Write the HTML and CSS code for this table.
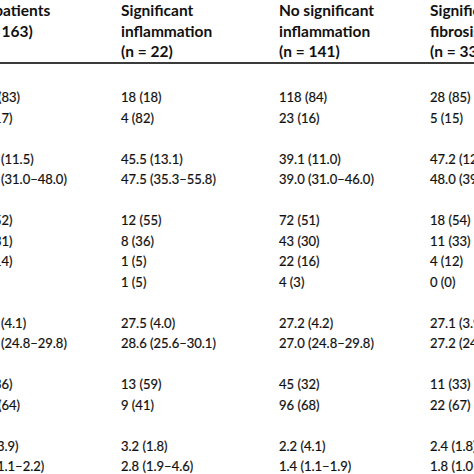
FILE: index.html
```html
<!DOCTYPE html>
<html>
<head>
<meta charset="utf-8">
<link rel="stylesheet" href="styles.css">
</head>
<body>
<table class="data">
  <colgroup>
    <col class="c-a"><col class="c-b"><col class="c-c"><col class="c-d">
  </colgroup>
  <thead>
    <tr>
      <th>All patients<br>(n = 163)</th>
      <th>Significant<br>inflammation<br>(n = 22)</th>
      <th>No significant<br>inflammation<br>(n = 141)</th>
      <th>Significant<br>fibrosis<br>(n = 33)</th>
    </tr>
  </thead>
  <tbody>
    <tr class="gap first"><td></td><td></td><td></td><td></td></tr>
    <tr><td>136 (83)</td><td>18 (18)</td><td>118 (84)</td><td>28 (85)</td></tr>
    <tr><td>27 (17)</td><td>4 (82)</td><td>23 (16)</td><td>5 (15)</td></tr>
    <tr class="gap"><td></td><td></td><td></td><td></td></tr>
    <tr><td>40.0 (11.5)</td><td>45.5 (13.1)</td><td>39.1 (11.0)</td><td>47.2 (12.3)</td></tr>
    <tr><td>40.0 (31.0–48.0)</td><td>47.5 (35.3–55.8)</td><td>39.0 (31.0–46.0)</td><td>48.0 (39.0–55.0)</td></tr>
    <tr class="gap"><td></td><td></td><td></td><td></td></tr>
    <tr><td>84 (52)</td><td>12 (55)</td><td>72 (51)</td><td>18 (54)</td></tr>
    <tr><td>51 (31)</td><td>8 (36)</td><td>43 (30)</td><td>11 (33)</td></tr>
    <tr><td>23 (14)</td><td>1 (5)</td><td>22 (16)</td><td>4 (12)</td></tr>
    <tr><td>5 (3)</td><td>1 (5)</td><td>4 (3)</td><td>0 (0)</td></tr>
    <tr class="gap"><td></td><td></td><td></td><td></td></tr>
    <tr><td>27.2 (4.1)</td><td>27.5 (4.0)</td><td>27.2 (4.2)</td><td>27.1 (3.9)</td></tr>
    <tr><td>27.1 (24.8–29.8)</td><td>28.6 (25.6–30.1)</td><td>27.0 (24.8–29.8)</td><td>27.2 (24.6–29.5)</td></tr>
    <tr class="gap"><td></td><td></td><td></td><td></td></tr>
    <tr><td>58 (36)</td><td>13 (59)</td><td>45 (32)</td><td>11 (33)</td></tr>
    <tr><td>105 (64)</td><td>9 (41)</td><td>96 (68)</td><td>22 (67)</td></tr>
    <tr class="gap"><td></td><td></td><td></td><td></td></tr>
    <tr><td>2.4 (3.9)</td><td>3.2 (1.8)</td><td>2.2 (4.1)</td><td>2.4 (1.8)</td></tr>
    <tr><td>1.5 (1.1–2.2)</td><td>2.8 (1.9–4.6)</td><td>1.4 (1.1–1.9)</td><td>1.8 (1.0–3.0)</td></tr>
  </tbody>
</table>
</body>
</html>
```
FILE: styles.css
```css
html, body {
  margin: 0;
  padding: 0;
  background: #ffffff;
  overflow: hidden;
}

body {
  width: 474px;
  height: 474px;
  font-family: Lato, "Open Sans", sans-serif;
  color: #111111;
}

.data {
  border-collapse: collapse;
  table-layout: fixed;
  width: 609px;
  margin-left: -28px;
}

.c-a { width: 149px; }
.c-b { width: 158px; }
.c-c { width: 151px; }
.c-d { width: 151px; }

.data th {
  font-weight: 700;
  font-size: 15.5px;
  line-height: 20.5px;
  text-align: left;
  vertical-align: top;
  padding: 0;
  height: 61px;
  color: #111111;
  white-space: nowrap;
  border-bottom: 2px solid #3b3b3b;
}

.data td {
  font-size: 13px;
  line-height: 20.5px;
  height: 20.5px;
  padding: 0;
  white-space: nowrap;
  vertical-align: middle;
  -webkit-text-stroke: 0.2px #111111;
}

.data .gap.first td {
  height: 23.5px;
}
```
